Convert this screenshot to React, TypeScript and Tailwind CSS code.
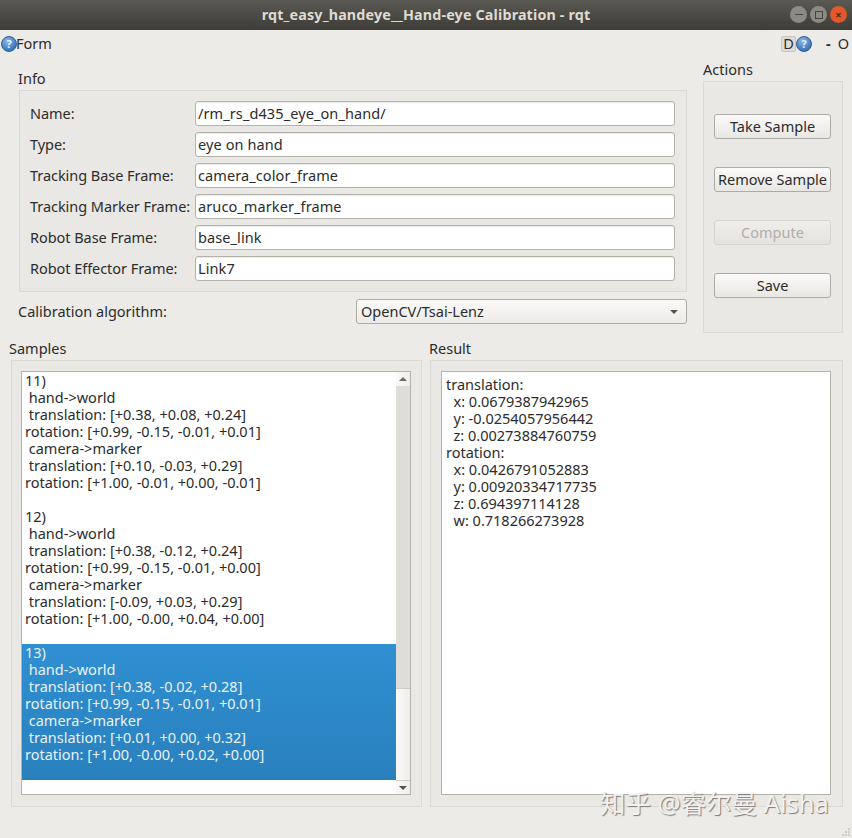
import React from "react";

function Help() {
  return (
    <span className="flex h-[16px] w-[16px] shrink-0 items-center justify-center rounded-full border border-[#2f5f96] bg-[radial-gradient(circle_at_40%_30%,#8fb8e4,#3a78bd_70%)] text-[11px] font-bold leading-none text-[#e8f0f8]">
      ?
    </span>
  );
}

function Field({ label, value }: { label: string; value: string }) {
  return (
    <div className="flex h-[25px] items-center">
      <div className="w-[165px] shrink-0 whitespace-nowrap tracking-[-0.05px]">{label}</div>
      <div className="flex h-[25px] flex-1 items-center rounded-[3px] border border-[#b5b2ab] bg-white pl-[2px] tracking-[0.1px] shadow-[inset_0_1px_1px_#e8e8e8]">
        {value}
      </div>
    </div>
  );
}

function Btn({ label, disabled }: { label: string; disabled?: boolean }) {
  return (
    <div
      className={
        "flex h-[25px] items-center justify-center rounded-[3px] border " +
        (disabled
          ? "border-[#d6d3cd] bg-gradient-to-b from-[#efeeeb] to-[#e6e3df] text-[#b0aeaa]"
          : "border-[#aeaba4] bg-gradient-to-b from-[#fbfafa] to-[#e9e7e3] text-[#2c2c2c]")
      }
    >
      {label}
    </div>
  );
}

function Sample({ n, lines, selected }: { n: string; lines: string[]; selected?: boolean }) {
  return (
    <div
      className={
        "h-[136px] whitespace-pre pl-[3px] leading-[17px] " +
        (selected ? "bg-gradient-to-b from-[#2f90d2] to-[#2a80bd] text-[#e9f2f8]" : "")
      }
    >
      {[n, ...lines].join("\n")}
    </div>
  );
}

export default function App() {
  return (
    <div
      className="relative flex h-[838px] w-[852px] flex-col overflow-hidden bg-[#edebe7] text-[14.5px] text-[#2c2c2c]"
      style={{ fontFamily: '"Noto Sans", "Noto Sans CJK SC", sans-serif' }}
    >
      {/* Title bar */}
      <div className="relative flex h-[30px] shrink-0 items-center justify-center bg-gradient-to-b from-[#5a5953] to-[#3d3c37] pb-[1px] text-[14.3px] font-bold tracking-[0.16px] text-[#dfdbd2]">
        rqt_easy_handeye__Hand-eye Calibration - rqt
        <div className="absolute right-[5px] top-[6px] flex gap-[3px]">
          <span className="flex h-[17px] w-[17px] items-center justify-center rounded-full bg-[#8b8a85]">
            <span className="h-[1.5px] w-[8px] bg-[#45443f]" />
          </span>
          <span className="flex h-[17px] w-[17px] items-center justify-center rounded-full bg-[#8b8a85]">
            <span className="h-[8px] w-[8px] border border-[#45443f]" />
          </span>
          <span className="flex h-[17px] w-[17px] items-center justify-center rounded-full bg-[#e0582b] text-[11px] font-bold leading-none text-[#4a2a1c]">
            ×
          </span>
        </div>
      </div>

      {/* Plugin header */}
      <div className="flex h-[26px] shrink-0 items-center pl-[1px] pr-[3px] pt-[1px]">
        <Help />
        <span className="ml-[-1px]">Form</span>
        <div className="ml-auto flex items-center">
          <span className="flex h-[16px] w-[15px] items-center justify-center rounded-[2px] border border-[#c8c5bf] bg-[#dedcd8]">D</span>
          <Help />
          <span className="ml-[14px] font-bold">-</span>
          <span className="ml-[7px]">O</span>
        </div>
      </div>

      {/* Top section */}
      <div className="flex h-[283px] shrink-0 pl-[18px] pr-[9px]">
        <div className="flex w-[669px] flex-col pt-[13px]">
          <div className="h-[21px] leading-[18px]">Info</div>
          <div className="ml-[1px] flex h-[202px] flex-col gap-[6px] border border-[#dcd9d3] bg-[#eae8e4] pl-[10px] pr-[11px] pt-[10px]">
            <Field label="Name:" value="/rm_rs_d435_eye_on_hand/" />
            <Field label="Type:" value="eye on hand" />
            <Field label="Tracking Base Frame:" value="camera_color_frame" />
            <Field label="Tracking Marker Frame:" value="aruco_marker_frame" />
            <Field label="Robot Base Frame:" value="base_link" />
            <Field label="Robot Effector Frame:" value="Link7" />
          </div>
          <div className="mt-[7px] flex h-[25px] items-center">
            <div className="w-[338px] shrink-0">Calibration algorithm:</div>
            <div className="flex h-[25px] flex-1 items-center justify-between rounded-[3px] border border-[#aeaba4] bg-gradient-to-b from-[#fbfafa] to-[#ecebe7] pl-[4px] pr-[8px]">
              <span>OpenCV/Tsai-Lenz</span>
              <span className="h-0 w-0 border-x-[4px] border-t-[4px] border-x-transparent border-t-[#55544f]" />
            </div>
          </div>
        </div>
        <div className="ml-[16px] flex w-[140px] flex-col pt-[4px]">
          <div className="h-[21px] leading-[18px]">Actions</div>
          <div className="flex h-[252px] flex-col gap-[28px] border border-[#dcd9d3] bg-[#eae8e4] pl-[10px] pr-[11px] pt-[32px]">
            <Btn label="Take Sample" />
            <Btn label="Remove Sample" />
            <Btn label="Compute" disabled />
            <Btn label="Save" />
          </div>
        </div>
      </div>

      {/* Bottom section */}
      <div className="flex shrink-0 pl-[9px] pr-[9px]">
        <div className="w-[413px]">
          <div className="h-[21px] leading-[18px]">Samples</div>
          <div className="ml-[2px] flex h-[447px] w-[411px] border border-[#dcd9d3] bg-[#eae8e4] pb-[11px] pl-[9px] pr-[10px] pt-[10px]">
            <div className="flex h-[424px] flex-1 border border-[#b5b2ab] bg-white">
              <div className="flex-1">
                <Sample n="11)" lines={[" hand->world", " translation: [+0.38, +0.08, +0.24]", "rotation: [+0.99, -0.15, -0.01, +0.01]", " camera->marker", " translation: [+0.10, -0.03, +0.29]", "rotation: [+1.00, -0.01, +0.00, -0.01]"]} />
                <Sample n="12)" lines={[" hand->world", " translation: [+0.38, -0.12, +0.24]", "rotation: [+0.99, -0.15, -0.01, +0.00]", " camera->marker", " translation: [-0.09, +0.03, +0.29]", "rotation: [+1.00, -0.00, +0.04, +0.00]"]} />
                <Sample selected n="13)" lines={[" hand->world", " translation: [+0.38, -0.02, +0.28]", "rotation: [+0.99, -0.15, -0.01, +0.01]", " camera->marker", " translation: [+0.01, +0.00, +0.32]", "rotation: [+1.00, -0.00, +0.02, +0.00]"]} />
              </div>
              <div className="flex w-[14px] shrink-0 flex-col bg-gradient-to-r from-[#fafafa] to-[#efeeeb]">
                <div className="flex h-[14px] items-center justify-center">
                  <span className="h-0 w-0 border-x-[4px] border-b-[4px] border-x-transparent border-b-[#6b6a65]" />
                </div>
                <div className="h-[303px] border-b border-[#cfccc6] bg-[#dfddd9]" />
                <div className="flex-1" />
                <div className="flex h-[14px] items-center justify-center border-t border-[#cfccc6]">
                  <span className="h-0 w-0 border-x-[4px] border-t-[4px] border-x-transparent border-t-[#55544f]" />
                </div>
              </div>
            </div>
          </div>
        </div>
        <div className="ml-[8px] w-[413px]">
          <div className="ml-[-1px] h-[21px] leading-[18px]">Result</div>
          <div className="flex h-[447px] border border-[#dcd9d3] bg-[#eae8e4] pb-[11px] pl-[10px] pr-[11px] pt-[10px]">
            <div className="h-[424px] flex-1 whitespace-pre border border-[#b5b2ab] bg-white pl-[4px] pt-[4px] leading-[17px]">
              {"translation:\n  x: 0.0679387942965\n  y: -0.0254057956442\n  z: 0.00273884760759\nrotation:\n  x: 0.0426791052883\n  y: 0.00920334717735\n  z: 0.694397114128\n  w: 0.718266273928"}
            </div>
          </div>
        </div>
      </div>

      {/* Watermark overlay */}
      <div className="absolute left-[600px] top-[787px] whitespace-nowrap text-[25.5px] leading-[32px] text-[#f2f1ef] [text-shadow:1px_1px_1px_#7a7a7a]">
        知乎 @睿尔曼 Aisha
      </div>

      {/* Resize grip */}
      <div className="absolute bottom-[2px] right-[2px] grid grid-cols-3 gap-[1px]">
        <span /><span /><span className="h-[2px] w-[2px] bg-[#cfccc6]" />
        <span /><span className="h-[2px] w-[2px] bg-[#cfccc6]" /><span className="h-[2px] w-[2px] bg-[#cfccc6]" />
        <span className="h-[2px] w-[2px] bg-[#cfccc6]" /><span className="h-[2px] w-[2px] bg-[#cfccc6]" /><span className="h-[2px] w-[2px] bg-[#cfccc6]" />
      </div>
    </div>
  );
}
